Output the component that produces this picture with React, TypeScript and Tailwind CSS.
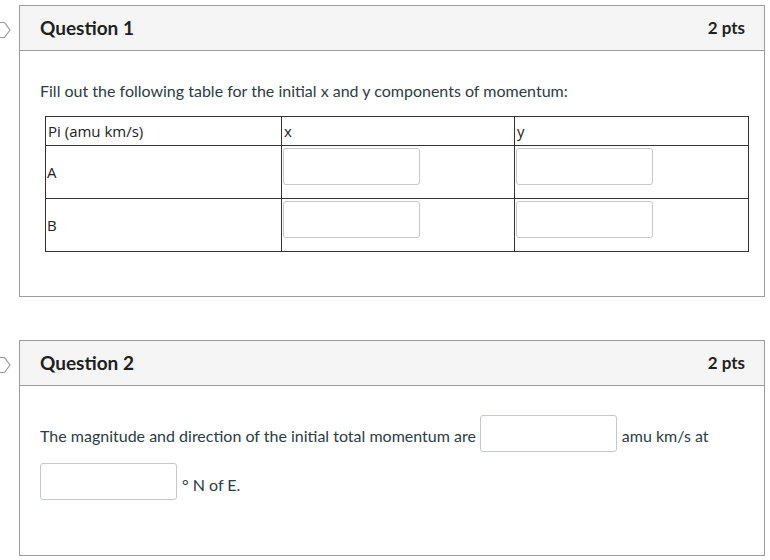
import React from "react";

function Marker() {
  return (
    <svg className="absolute left-[-20px] top-[14px]" width="12" height="20" viewBox="0 0 12 20">
      <path d="M-4 2.5 H4.5 L10 10 L4.5 17.5 H-4" fill="none" stroke="#9a9a9a" strokeWidth="1.2" />
    </svg>
  );
}

function Box() {
  return <div className="h-[37px] w-[137px] shrink-0 rounded-[3px] border border-[#c4c8cc] bg-white" />;
}

function Card({ title, children, bodyClass }: { title: string; children: React.ReactNode; bodyClass: string }) {
  return (
    <div className="relative ml-[19px] w-[746px] border border-[#9c9c9c] bg-white">
      <Marker />
      <div className="flex h-[45px] items-center justify-between border-b border-[#9c9c9c] bg-[#f5f5f5] pl-[20px] pr-[19px]">
        <span className="text-[19px] font-bold text-[#1f1f1f]">{title}</span>
        <span className="text-[17px] font-bold text-[#1f1f1f]">2 pts</span>
      </div>
      <div className={bodyClass}>{children}</div>
    </div>
  );
}

export default function App() {
  const mid = "border border-[#333] align-middle";
  const top = "border border-[#333] align-top";
  return (
    <div className="min-h-[560px] bg-white pt-[5px] text-[#2d3b45]" style={{ fontFamily: "Lato, 'Open Sans', sans-serif" }}>
      <Card title="Question 1" bodyClass="h-[245px] pl-[20px] pt-[30px]">
        <div className="text-[16px] leading-[20px] text-[#2d3b45]">
          Fill out the following table for the initial x and y components of momentum:
        </div>
        <table
          className="ml-[5px] mt-[15px] w-[704px] border-collapse text-[15px] text-[#222]"
          style={{ fontFamily: "'Open Sans', sans-serif" }}
        >
          <tbody>
            <tr className="h-[29px]">
              <td className={`${mid} w-[236px] px-[2px]`}>Pi (amu km/s)</td>
              <td className={`${mid} w-[233px] px-[2px]`}>x</td>
              <td className={`${mid} px-[2px]`}>y</td>
            </tr>
            {["A", "B"].map((r) => (
              <tr key={r} className="h-[53px]">
                <td className={`${mid} px-[1px]`}>{r}</td>
                <td className={`${top} pl-[1px] pt-[2px]`}>
                  <Box />
                </td>
                <td className={`${top} pl-[1px] pt-[2px]`}>
                  <Box />
                </td>
              </tr>
            ))}
          </tbody>
        </table>
      </Card>
      <div className="h-[43px]" />
      <Card title="Question 2" bodyClass="h-[169px] pl-[20px] pt-[29px] text-[16px] text-[#2d3b45]">
        <div className="flex items-center">
          <span className="pt-[5px]">The magnitude and direction of the initial total momentum are</span>
          <div className="ml-[4px]">
            <Box />
          </div>
          <span className="ml-[5px] pt-[5px]">amu km/s at</span>
        </div>
        <div className="mt-[11px] flex items-center">
          <Box />
          <span className="ml-[5px] pt-[6px]">° N of E.</span>
        </div>
      </Card>
    </div>
  );
}
